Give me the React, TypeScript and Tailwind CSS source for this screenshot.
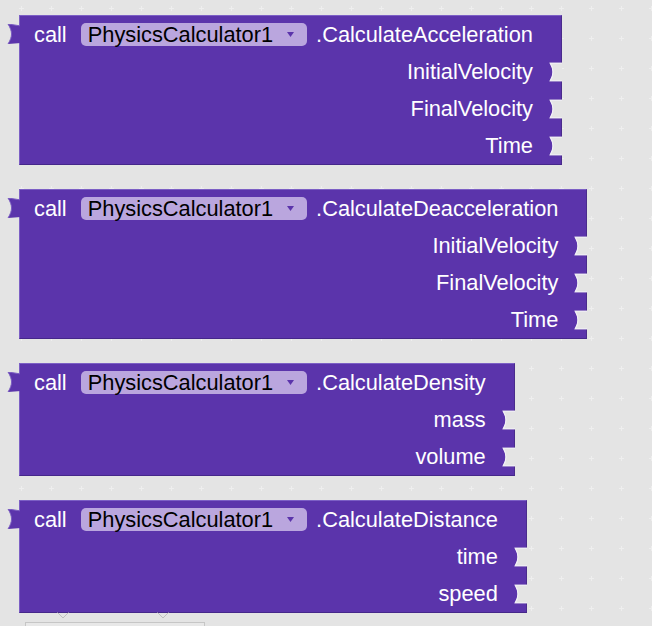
import React from "react"

type CallBlock = {
  method: string
  inputs: string[]
}

const BLOCKS: CallBlock[] = [
  { method: ".CalculateAcceleration", inputs: ["InitialVelocity", "FinalVelocity", "Time"] },
  { method: ".CalculateDeacceleration", inputs: ["InitialVelocity", "FinalVelocity", "Time"] },
  { method: ".CalculateDensity", inputs: ["mass", "volume"] },
  { method: ".CalculateDistance", inputs: ["time", "speed"] },
]

// plug on the left side of a value block
const OutputTab = () => (
  <svg
    className="absolute left-[-13px] top-[8px]"
    width="14"
    height="20"
    viewBox="0 0 14 20"
  >
    <path d="M14,2 L1,0 C3.5,4 4.5,7 4.5,10 C4.5,13 3.5,16 1,20 L14,19 Z" fill="#5b34ab" />
    <path d="M13,1.8 L1,0 C3.5,4 4.5,7 4.5,10 C4.5,13 3.5,16 1,20" fill="none" stroke="#7a5cc2" strokeWidth="1" />
  </svg>
)

// socket cut into the right edge for an external input
const InputSocket = () => (
  <svg
    className="absolute right-[-1px] top-1/2 -translate-y-1/2"
    width="13"
    height="19"
    viewBox="0 0 13 19"
  >
    <path d="M13,0 L0.5,0 C2.5,3 3.5,6.5 3.5,9.5 C3.5,12.5 2.5,16 0.5,19 L13,19 Z" fill="#e4e4e4" />
    <path d="M13,0.6 L1.2,0.6 C3,3.5 4,6.5 4,9.5 C4,12.5 3,15.5 1.2,18.4 L13,18.4" fill="none" stroke="#f1eff6" strokeWidth="1.2" />
  </svg>
)

const ComponentDropdown = () => (
  <div className="flex h-[23px] items-center rounded-[5px] bg-[#baa6de] pl-[7px] pr-[13px] text-black">
    <span>PhysicsCalculator1</span>
    <svg className="ml-[14px]" width="7" height="5" viewBox="0 0 7 5">
      <path d="M0,0 L7,0 L3.5,5 Z" fill="#5b34ab" />
    </svg>
  </div>
)

const MethodCallBlock = ({ block }: { block: CallBlock }) => {
  return (
    <div className="relative flex w-fit flex-col border border-t-[#7c5fc5] border-l-[#7c5fc5] border-r-[#4a2b8c] border-b-[#45278a] bg-[#5b34ab] text-white">
      <OutputTab />
      <div className="flex h-[37px] items-center pl-[14px] pr-[28px]">
        <span>call</span>
        <div className="ml-[14px]">
          <ComponentDropdown />
        </div>
        <span className="ml-[9px]">{block.method}</span>
      </div>
      {block.inputs.map((name) => (
        <div key={name} className="relative flex h-[37px] items-center justify-end pr-[28px]">
          <span>{name}</span>
          <InputSocket />
        </div>
      ))}
    </div>
  )
}

const App = () => {
  return (
    <div className="relative h-[626px] w-full overflow-hidden bg-[#e4e4e4] font-['Liberation_Sans',Arial,sans-serif] text-[21.8px] leading-none">
      <svg className="absolute inset-0 h-full w-full">
        <defs>
          <pattern id="grid" x="6" y="-7" width="30" height="30" patternUnits="userSpaceOnUse">
            <rect x="13" y="15" width="5" height="1" fill="#eeeeee" />
            <rect x="15" y="13" width="1" height="5" fill="#eeeeee" />
          </pattern>
        </defs>
        <rect width="100%" height="100%" fill="url(#grid)" />
      </svg>

      <div className="relative flex flex-col items-start pl-[19px] pt-[15px]">
        <div className="flex flex-col items-start gap-[24px]">
          {BLOCKS.map((b) => (
            <MethodCallBlock key={b.method} block={b} />
          ))}
        </div>

        <div className="relative ml-[6px] mt-[9px] h-[24px] w-[180px] border border-[#c6c6c6] bg-[#e8e8e8]">
          <svg className="absolute left-[31px] top-[-11px]" width="12" height="7" viewBox="0 0 12 7">
            <polyline points="0.5,0.5 6,6 11.5,0.5" fill="none" stroke="#bfbfbf" strokeWidth="1" />
          </svg>
          <svg className="absolute left-[131px] top-[-11px]" width="12" height="7" viewBox="0 0 12 7">
            <polyline points="0.5,0.5 6,6 11.5,0.5" fill="none" stroke="#bfbfbf" strokeWidth="1" />
          </svg>
        </div>
      </div>
    </div>
  )
}

export default App
